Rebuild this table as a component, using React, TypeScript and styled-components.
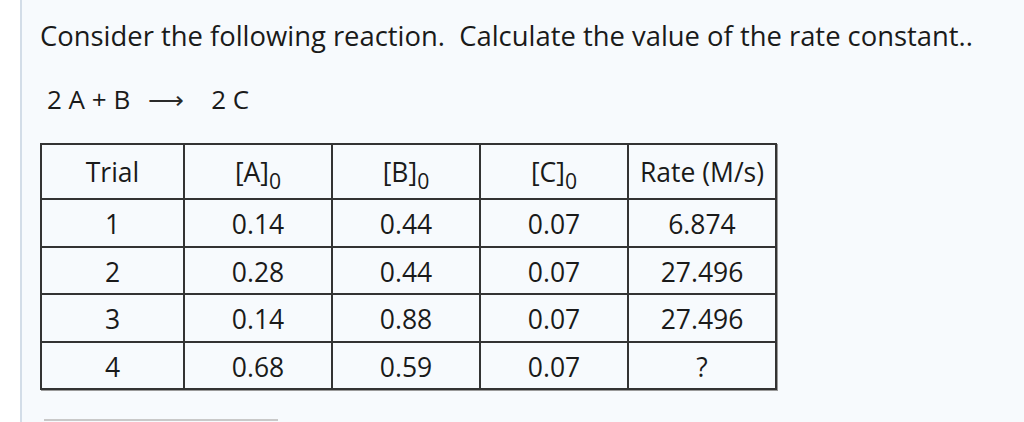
import React from "react";
import styled, { createGlobalStyle } from "styled-components";

const GlobalStyle = createGlobalStyle`
  html, body {
    margin: 0;
    padding: 0;
    background: #ffffff;
  }
  body {
    font-family: "Open Sans", "Liberation Sans", sans-serif;
    color: #1a1a1a;
  }
`;

const Page = styled.div`
  height: 422px;
  padding-left: 20px;
  overflow: hidden;
`;

const Panel = styled.div`
  height: 100%;
  border-left: 2px solid #d3dde8;
  background: #f7fafd;
  padding: 18px 0 0 18px;
  box-sizing: border-box;
`;

const Question = styled.p`
  margin: 0;
  font-size: 27.4px;
  line-height: 36px;
  white-space: nowrap;
`;

const Equation = styled.div`
  margin: 30px 0 0 7px;
  font-size: 26px;
  line-height: 30px;
  display: flex;
  align-items: baseline;
`;

const Arrow = styled.span`
  font-family: "DejaVu Sans", sans-serif;
  font-size: 25px;
  font-weight: 300;
  color: #2a2a2a;
  margin: 0 27px 0 18px;
`;

const Table = styled.table`
  margin-top: 27px;
  border-collapse: collapse;
  box-shadow: 1px 1px 0 #9a9a9a;
  font-size: 26.5px;
`;

const Cell = styled.td<{ $w: number; $head?: boolean }>`
  width: ${(p) => p.$w}px;
  height: ${(p) => (p.$head ? 53 : 42.5)}px;
  padding: ${(p) => (p.$head ? "0" : "3px 0 0")};
  border: 2px solid #333333;
  text-align: center;
  vertical-align: middle;
  white-space: nowrap;
`;

const Sub = styled.sub`
  font-size: 0.8em;
  vertical-align: -0.32em;
  line-height: 0;
`;

const Footer = styled.div`
  width: 234px;
  margin: 29px 0 0 4px;
  border-top: 2px solid #c9c9c9;
`;

const widths = [141, 146, 146, 146, 146];

const rows = [
  ["1", "0.14", "0.44", "0.07", "6.874"],
  ["2", "0.28", "0.44", "0.07", "27.496"],
  ["3", "0.14", "0.88", "0.07", "27.496"],
  ["4", "0.68", "0.59", "0.07", "?"],
];

export default function App() {
  return (
    <Page>
      <GlobalStyle />
      <Panel>
        <Question>
          Consider the following reaction.&nbsp; Calculate the value of the rate constant..
        </Question>
        <Equation>
          <span>2 A + B</span>
          <Arrow>⟶</Arrow>
          <span>2 C</span>
        </Equation>
        <Table>
          <tbody>
            <tr>
              <Cell $w={widths[0]} $head>Trial</Cell>
              <Cell $w={widths[1]} $head>[A]<Sub>0</Sub></Cell>
              <Cell $w={widths[2]} $head>[B]<Sub>0</Sub></Cell>
              <Cell $w={widths[3]} $head>[C]<Sub>0</Sub></Cell>
              <Cell $w={widths[4]} $head>Rate (M/s)</Cell>
            </tr>
            {rows.map((r) => (
              <tr key={r[0]}>
                {r.map((v, i) => (
                  <Cell key={i} $w={widths[i]}>{v}</Cell>
                ))}
              </tr>
            ))}
          </tbody>
        </Table>
        <Footer />
      </Panel>
    </Page>
  );
}
